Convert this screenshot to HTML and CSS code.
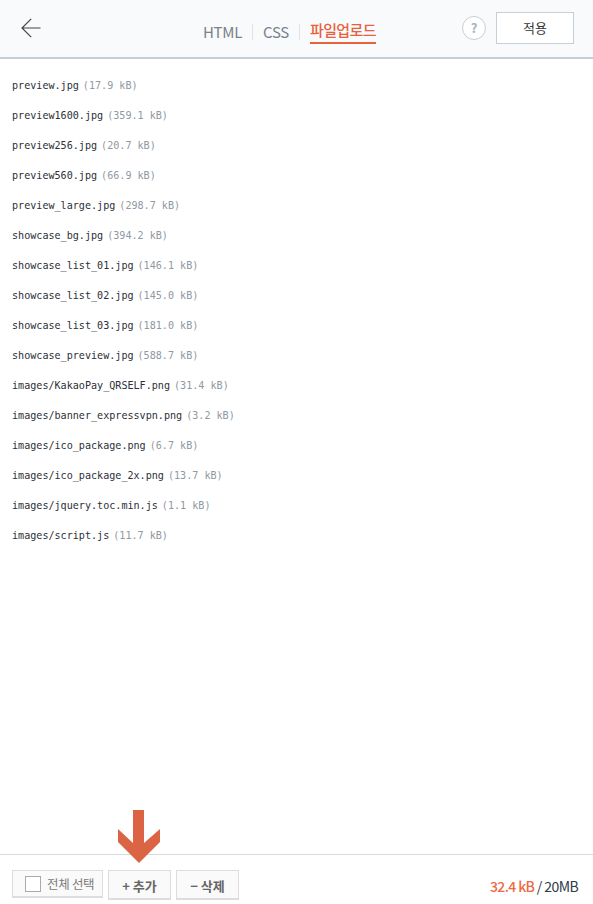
FILE: index.html
```html
<!DOCTYPE html>
<html>
<head>
	<title>파일업로드</title>
	<meta http-equiv="content-type" content="text/html;charset=utf-8" />
	<link rel="stylesheet" href="styles.css">
</head>
<body>
	<div class="head">
		<a class="back">
			<svg width="20" height="20" viewBox="0 0 20 20"><path d="M19.500 10H1M10.200 .8L1 10l9.200 9.200" fill="none" stroke="#444" stroke-width="1.200"/></svg>
		</a>
		<div class="tabs">
			<span class="tab">HTML</span>
			<span class="sep"></span>
			<span class="tab">CSS</span>
			<span class="sep"></span>
			<span class="tab on">파일업로드</span>
		</div>
		<span class="help">?</span>
		<button class="apply">적용</button>
	</div>
	<ul class="files">
		<li>preview.jpg<span>(17.9 kB)</span></li>
		<li>preview1600.jpg<span>(359.1 kB)</span></li>
		<li>preview256.jpg<span>(20.7 kB)</span></li>
		<li>preview560.jpg<span>(66.9 kB)</span></li>
		<li>preview_large.jpg<span>(298.7 kB)</span></li>
		<li>showcase_bg.jpg<span>(394.2 kB)</span></li>
		<li>showcase_list_01.jpg<span>(146.1 kB)</span></li>
		<li>showcase_list_02.jpg<span>(145.0 kB)</span></li>
		<li>showcase_list_03.jpg<span>(181.0 kB)</span></li>
		<li>showcase_preview.jpg<span>(588.7 kB)</span></li>
		<li>images/KakaoPay_QRSELF.png<span>(31.4 kB)</span></li>
		<li>images/banner_expressvpn.png<span>(3.2 kB)</span></li>
		<li>images/ico_package.png<span>(6.7 kB)</span></li>
		<li>images/ico_package_2x.png<span>(13.7 kB)</span></li>
		<li>images/jquery.toc.min.js<span>(1.1 kB)</span></li>
		<li>images/script.js<span>(11.7 kB)</span></li>
	</ul>
	<div class="foot">
		<svg class="arrow" width="42" height="54" viewBox="0 0 42 54"><path d="M15 0H26V33L42 19V32L21 53 0 32V19L15 33Z" fill="#db6444"/></svg>
		<button class="btn all"><i class="check"></i>전체 선택</button>
		<button class="btn bold">+ 추가</button>
		<button class="btn bold">− 삭제</button>
		<div class="size"><b>32.4 kB</b> / 20MB</div>
	</div>
</body>
</html>
```

FILE: styles.css
```css
*{padding:0;margin:0;box-sizing:border-box;}
html,body{height:100%;}
body{display:flex;flex-direction:column;background:#fff;font-family:"Noto Sans CJK KR","Noto Sans",sans-serif;color:#333;}

.head{height:59px;flex:none;display:flex;align-items:center;background:#f9fafc;border-bottom:2px solid #c6ced8;padding:0 19px 2px 21px;position:relative;}
.back{display:block;width:20px;height:20px;}
.back svg{display:block;}
.tabs{position:absolute;left:203px;top:19px;display:flex;align-items:center;font-size:15px;line-height:22px;letter-spacing:-.3px;}
.tab{color:#77828c;}
.tab.on{color:#e8603c;font-weight:500;border-bottom:2px solid #e8603c;height:25px;letter-spacing:-.6px;}
.sep{width:1px;height:16px;background:#dfe2e6;margin:0 10px;}
.help{margin-left:auto;width:24px;height:24px;border:1px solid #c6ced8;border-radius:50%;background:#fff;color:#aab2bc;font-size:13px;font-weight:700;line-height:22px;text-align:center;}
.apply{width:78px;height:32px;margin-left:10px;border:1px solid #c6ced8;background:#fff;color:#333;font:13px "Noto Sans CJK KR",sans-serif;}

.files{flex:1;list-style:none;padding-top:12px;}
.files li{height:30px;line-height:30px;padding-left:12px;font-family:"DejaVu Sans Mono",monospace;font-size:10.1px;color:#2b3038;white-space:nowrap;}
.files span{color:#8f98a3;margin-left:4px;}

.foot{height:50px;flex:none;display:flex;align-items:flex-start;gap:5px;border-top:1px solid #d9d9d9;padding:15px 15px 0 12px;position:relative;}
.arrow{position:absolute;left:118px;top:-45px;}
.btn{height:30px;padding:0;background:#fafafa;border:1px solid #ddd;border-bottom-width:2px;color:#666;font:13px "Noto Sans CJK KR",sans-serif;white-space:nowrap;}
.btn.all{display:flex;align-items:center;gap:6px;width:91px;padding-left:12px;color:#7a7a7a;height:28px;font-size:12.500px;letter-spacing:-.3px;}
.btn.bold{font-weight:700;width:63px;padding-top:2px;}
.check{width:16px;height:16px;background:#fff;border:1px solid #aaa;flex:none;}
.size{margin-left:auto;align-self:center;font-size:14px;letter-spacing:-.6px;color:#2f3a45;margin-top:-3px;}
.size b{font-weight:500;color:#ee6a45;}
```
